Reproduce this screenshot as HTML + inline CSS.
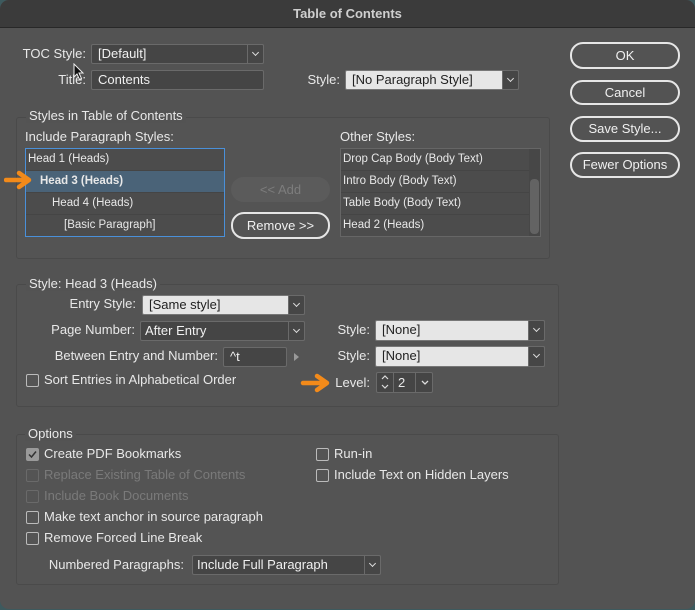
<!DOCTYPE html>
<html><head><meta charset="utf-8"><style>
*{box-sizing:border-box;margin:0;padding:0}
body{width:695px;height:610px;background:#3d5a5e;font-family:"Liberation Sans",sans-serif;font-size:12.5px;color:#e8e8e8;position:relative;overflow:hidden}
.win{position:absolute;left:0;top:0;width:695px;height:609px;background:#535353;border-radius:9px;overflow:hidden}
.tb{position:absolute;left:0;top:0;width:100%;height:28px;background:#3b3b3b;border-bottom:1px solid #282828;text-align:center;line-height:28px;font-weight:bold;color:#cfcfcf;font-size:13px}
.a{position:absolute;white-space:nowrap}
.lbl{position:absolute;white-space:nowrap;line-height:16px;font-size:13px}
.r{text-align:right}
.fld{position:absolute;border:1px solid #6a6a6a;border-radius:2px;background:#454545;line-height:18px;padding-left:6px;color:#f0f0f0;font-size:13px}
.lt{background:#e6e6e6;color:#222;border-color:#777}
.arr{position:absolute;top:-1px;right:-1px;bottom:-1px;width:17px;background:#464646;border:1px solid #6a6a6a;border-radius:0 2px 2px 0}
.arr:after{content:"";position:absolute;left:5px;top:5px;width:4px;height:4px;border-right:1.3px solid #ddd;border-bottom:1.3px solid #ddd;transform:rotate(45deg)}
.btn{position:absolute;border:2px solid #e6e6e6;border-radius:13px;text-align:center;color:#f0f0f0;font-size:13px}
.grp{position:absolute;border:1px solid #4a4a4a;border-radius:3px;background:#545454}
.gl{position:absolute;background:#535353;padding:0 3px;line-height:14px;font-size:13px}
.list{position:absolute;border:1px solid #666;background:#4c4c4c}
.row{height:22px;line-height:21px;border-bottom:1px solid #454545;font-size:11.5px;padding-left:2px;white-space:nowrap}
.cb{position:absolute;width:13px;height:13px;border:1px solid #bbb;border-radius:2px}
.dis{color:#7a7a7a}
.cbd{border-color:#6a6a6a}
</style></head><body>
<div class="win">
<div class="tb">Table of Contents</div>

<div class="lbl r" style="left:0;width:86px;top:46px">TOC Style:</div>
<div class="fld" style="left:91px;top:44px;width:173px;height:20px">[Default]<div class="arr"></div></div>
<div class="lbl r" style="left:0;width:86px;top:72px">Title:</div>
<div class="fld" style="left:91px;top:70px;width:173px;height:20px">Contents</div>
<svg class="a" style="left:73px;top:63px" width="12" height="18" viewBox="0 0 12 18"><path d="M1 1 L1 14 L4 11 L6.5 16.5 L8.5 15.5 L6 10 L10 10 Z" fill="#111" stroke="#eee" stroke-width="1"/></svg>
<div class="lbl r" style="left:280px;width:60px;top:72px">Style:</div>
<div class="fld lt" style="left:345px;top:70px;width:174px;height:20px">[No Paragraph Style]<div class="arr"></div></div>

<div class="btn" style="left:570px;top:42px;width:110px;height:27px;line-height:23px">OK</div>
<div class="btn" style="left:570px;top:80px;width:110px;height:25px;line-height:21px">Cancel</div>
<div class="btn" style="left:570px;top:116px;width:110px;height:26px;line-height:22px">Save Style...</div>
<div class="btn" style="left:570px;top:152px;width:110px;height:26px;line-height:22px">Fewer Options</div>

<div class="grp" style="left:16px;top:117px;width:534px;height:142px"></div>
<div class="gl" style="left:26px;top:109px">Styles in Table of Contents</div>
<div class="lbl" style="left:25px;top:129px">Include Paragraph Styles:</div>
<div class="list" style="left:25px;top:148px;width:200px;height:89px;border-color:#4a90d9">
<div class="row">Head 1 (Heads)</div>
<div class="row" style="background:#4a6378;font-weight:bold;padding-left:14px">Head 3 (Heads)</div>
<div class="row" style="padding-left:26px">Head 4 (Heads)</div>
<div class="row" style="padding-left:38px;border:0">[Basic Paragraph]</div>
</div>
<svg class="a" style="left:4px;top:170px" width="30" height="20" viewBox="0 0 30 20"><path d="M2 10 L24 10 M15 3 L25 10 L15 17" stroke="#f28a1a" stroke-width="4.5" fill="none" stroke-linecap="round" stroke-linejoin="round"/></svg>
<div class="a" style="left:231px;top:177px;width:99px;height:25px;border-radius:13px;background:#5b5b5b;color:#7d7d7d;text-align:center;line-height:25px;font-size:13px">&lt;&lt; Add</div>
<div class="btn" style="left:231px;top:212px;width:99px;height:27px;line-height:23px">Remove &gt;&gt;</div>
<div class="lbl" style="left:340px;top:129px">Other Styles:</div>
<div class="list" style="left:340px;top:148px;width:201px;height:89px">
<div class="row">Drop Cap Body (Body Text)</div>
<div class="row">Intro Body (Body Text)</div>
<div class="row">Table Body (Body Text)</div>
<div class="row" style="border:0">Head 2 (Heads)</div>
<div class="a" style="left:188px;top:0;width:11px;height:87px;background:#474747"></div>
<div class="a" style="left:189px;top:30px;width:9px;height:55px;background:#636363;border-radius:4px"></div>
</div>

<div class="grp" style="left:16px;top:284px;width:543px;height:123px"></div>
<div class="gl" style="left:26px;top:277px">Style: Head 3 (Heads)</div>
<div class="lbl r" style="left:0;width:136px;top:296px">Entry Style:</div>
<div class="fld lt" style="left:142px;top:295px;width:163px;height:20px">[Same style]<div class="arr"></div></div>
<div class="lbl r" style="left:0;width:135px;top:322px">Page Number:</div>
<div class="fld" style="left:140px;top:321px;width:165px;height:20px;padding-left:4px">After Entry<div class="arr"></div></div>
<div class="lbl r" style="left:0;width:218px;top:348px">Between Entry and Number:</div>
<div class="fld" style="left:223px;top:347px;width:64px;height:20px">^t</div>
<div class="a" style="left:294px;top:353px;width:0;height:0;border-left:5px solid #999;border-top:4px solid transparent;border-bottom:4px solid transparent"></div>
<div class="lbl r" style="left:310px;width:60px;top:322px">Style:</div>
<div class="fld lt" style="left:375px;top:320px;width:170px;height:21px">[None]<div class="arr"></div></div>
<div class="lbl r" style="left:310px;width:60px;top:348px">Style:</div>
<div class="fld lt" style="left:375px;top:346px;width:170px;height:21px">[None]<div class="arr"></div></div>
<div class="cb" style="left:26px;top:374px"></div>
<div class="lbl" style="left:44px;top:372px">Sort Entries in Alphabetical Order</div>
<svg class="a" style="left:300px;top:372px" width="32" height="22" viewBox="0 0 32 22"><path d="M3 11 L26 11 M17 4 L27 11 L17 18" stroke="#f28a1a" stroke-width="4.5" fill="none" stroke-linecap="round" stroke-linejoin="round"/></svg>
<div class="lbl r" style="left:320px;width:50px;top:375px">Level:</div>
<div class="fld" style="left:376px;top:372px;width:57px;height:21px;padding:0"></div>
<div class="a" style="left:393px;top:373px;width:1px;height:19px;background:#6a6a6a"></div>
<div class="a" style="left:415px;top:373px;width:1px;height:19px;background:#6a6a6a"></div>
<svg class="a" style="left:378px;top:373px" width="14" height="18" viewBox="0 0 14 18"><path d="M4 6 L7 3 L10 6 M4 12 L7 15 L10 12" stroke="#ddd" stroke-width="1.2" fill="none"/></svg>
<div class="lbl" style="left:398px;top:375px">2</div>
<svg class="a" style="left:419px;top:376px" width="12" height="12" viewBox="0 0 12 12"><path d="M3 5 L6 8 L9 5" stroke="#ddd" stroke-width="1.3" fill="none"/></svg>

<div class="grp" style="left:16px;top:434px;width:543px;height:151px"></div>
<div class="gl" style="left:25px;top:427px">Options</div>
<div class="cb" style="left:26px;top:448px;background:#9a9a9a;border-color:#9a9a9a"></div>
<svg class="a" style="left:26px;top:448px" width="13" height="13" viewBox="0 0 13 13"><path d="M3 6.5 L5.5 9 L10 3.5" stroke="#333" stroke-width="1.5" fill="none"/></svg>
<div class="lbl" style="left:44px;top:446px">Create PDF Bookmarks</div>
<div class="cb cbd" style="left:26px;top:469px"></div>
<div class="lbl dis" style="left:44px;top:467px">Replace Existing Table of Contents</div>
<div class="cb cbd" style="left:26px;top:490px"></div>
<div class="lbl dis" style="left:44px;top:488px">Include Book Documents</div>
<div class="cb" style="left:26px;top:511px"></div>
<div class="lbl" style="left:44px;top:509px">Make text anchor in source paragraph</div>
<div class="cb" style="left:26px;top:532px"></div>
<div class="lbl" style="left:44px;top:530px">Remove Forced Line Break</div>
<div class="cb" style="left:316px;top:448px"></div>
<div class="lbl" style="left:334px;top:446px">Run-in</div>
<div class="cb" style="left:316px;top:469px"></div>
<div class="lbl" style="left:334px;top:467px">Include Text on Hidden Layers</div>
<div class="lbl r" style="left:0;width:184px;top:557px">Numbered Paragraphs:</div>
<div class="fld" style="left:192px;top:555px;width:189px;height:20px;padding-left:4px">Include Full Paragraph<div class="arr"></div></div>
</div>
</body></html>
